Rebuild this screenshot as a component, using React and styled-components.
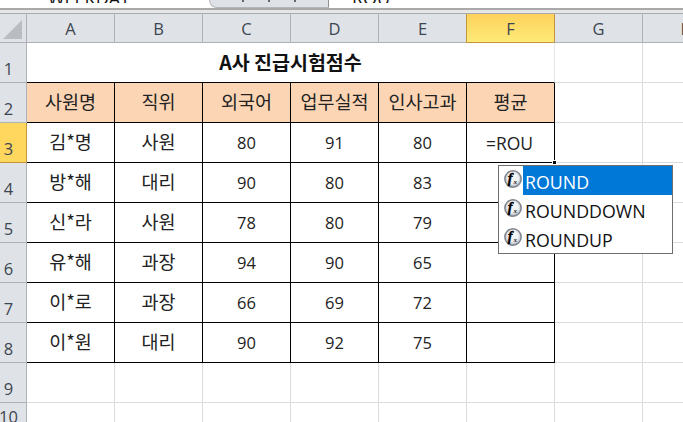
import React from "react";
import styled, { createGlobalStyle } from "styled-components";

const Global = createGlobalStyle`
  html, body { margin: 0; padding: 0; background: #fff; overflow: hidden; }
  #root { width: 683px; height: 422px; overflow: hidden; }
  * { box-sizing: border-box; }
`;

const FONT = `"Noto Sans CJK KR", "Noto Sans", sans-serif`;
const LATIN = `"Open Sans", "Noto Sans CJK KR", sans-serif`;

const Page = styled.div`
  width: 683px;
  height: 422px;
  display: flex;
  flex-direction: column;
  overflow: hidden;
  font-family: ${FONT};
  color: #222;
`;

const FormulaStrip = styled.div`
  height: 14px;
  flex: none;
  display: flex;
  background: #e6e6e6;
  border-bottom: 1px solid #a9abae;
  padding-bottom: 3px;
`;

const StripInner = styled.div`
  flex: 1;
  height: 10px;
  display: flex;
  background: #fff;
  border-bottom: 2px solid #a9a9a9;
  overflow: hidden;
`;

const ClippedText = styled.div`
  font-family: ${LATIN};
  font-size: 18px;
  line-height: 18px;
  height: 14px;
  overflow: hidden;
  color: #111;
  white-space: nowrap;
  margin-top: -11px;
  padding-left: ${(p) => p.$left}px;
  width: ${(p) => p.$width}px;
  flex: none;
`;

const FormulaTab = styled.div`
  width: 120px;
  flex: none;
  height: 8px;
  background: #dee1e6;
  border: 1px solid #b4b6ba;
  border-top: none;
  border-right: 1px solid #8e9094;
  border-bottom-left-radius: 14px;
  display: flex;
  justify-content: center;
  gap: 24px;
`;

const TabTick = styled.span`
  width: 2px;
  height: 2px;
  background: #666;
`;

const Sheet = styled.div`
  position: relative;
  display: grid;
  grid-template-columns: 27px repeat(8, 88px);
  grid-template-rows: 29px repeat(10, 40px);
`;

const Corner = styled.div`
  background: #dfe2e6;
  border-right: 1px solid #aeb1b5;
  border-bottom: 1px solid #aeb1b5;
  display: flex;
  align-items: flex-end;
  justify-content: flex-end;
  padding: 0 4px 3px 0;
`;

const CornerMark = styled.span`
  width: 19px;
  height: 19px;
  background: #b9bcc0;
  clip-path: polygon(100% 0, 100% 100%, 0 100%);
`;

const ColHead = styled.div`
  background: ${(p) => (p.$active ? "linear-gradient(#fdd25c, #ffea78)" : "#dfe2e6")};
  border-right: 1px solid ${(p) => (p.$active ? "#c6963c" : "#aeb1b5")};
  border-bottom: 1px solid ${(p) => (p.$active ? "#c6963c" : "#aeb1b5")};
  border-left: ${(p) => (p.$active ? "1px solid #c6963c" : "none")};
  margin-left: ${(p) => (p.$active ? "-1px" : "0")};
  display: flex;
  align-items: center;
  justify-content: center;
  font-family: ${LATIN};
  font-size: 16.5px;
  color: #3d4650;
`;

const RowHead = styled.div`
  background: ${(p) => (p.$active ? "#ffd65e" : "#dfe2e6")};
  border-right: 1px solid ${(p) => (p.$active ? "#c6963c" : "#aeb1b5")};
  border-bottom: 1px solid ${(p) => (p.$active ? "#c6963c" : "#aeb1b5")};
  display: flex;
  align-items: ${(p) => (p.$clipped ? "flex-start" : "flex-end")};
  justify-content: center;
  padding: ${(p) => (p.$clipped ? "3px 9px 0 0" : "0 9px 2px 0")};
  font-family: ${LATIN};
  font-size: 16.5px;
  line-height: 22px;
  color: #3d4650;
`;

const Empty = styled.div`
  border-right: 1px solid #dcdcdc;
  border-bottom: 1px solid #dcdcdc;
`;

const Title = styled.div`
  grid-column: span 6;
  border-right: 1px solid #e4e4e4;
  border-bottom: 1px solid #000;
  display: flex;
  align-items: center;
  justify-content: center;
  padding-bottom: 2px;
  font-size: 19.5px;
  font-weight: 700;
  color: #111;
`;

const Cell = styled.div`
  background: ${(p) => (p.$head ? "#fcd5b4" : "#fff")};
  border-right: 1px solid #000;
  border-bottom: 1px solid #000;
  display: flex;
  align-items: center;
  justify-content: center;
  padding-bottom: ${(p) => (p.$hangul ? "3px" : "0")};
  font-family: ${(p) => (p.$hangul ? FONT : LATIN)};
  font-size: ${(p) => (p.$hangul ? "18.5px" : "16.5px")};
  line-height: 22px;
  color: #222;
  white-space: nowrap;
`;

const EditCell = styled(Cell)`
  position: relative;
  font-size: 17.5px;
  padding-right: 2px;
`;

const Handle = styled.span`
  position: absolute;
  right: -3px;
  bottom: -3px;
  width: 5px;
  height: 5px;
  background: #000;
  border: 1px solid #fff;
`;

const Menu = styled.ul`
  position: absolute;
  left: 498px;
  top: 151px;
  width: 175px;
  height: 89px;
  margin: 0;
  padding: 0;
  list-style: none;
  background: #fff;
  border: 1px solid #6e6e6e;
  display: flex;
  flex-direction: column;
`;

const MenuItem = styled.li`
  height: 29px;
  display: flex;
  align-items: center;
  padding-left: 5px;
`;

const MenuLabel = styled.span`
  flex: 1;
  height: 100%;
  margin-left: 1px;
  padding: 3px 0 0 2px;
  display: flex;
  align-items: center;
  font-family: ${LATIN};
  font-size: 17.8px;
  background: ${(p) => (p.$selected ? "#0078d7" : "transparent")};
  color: ${(p) => (p.$selected ? "#fff" : "#111")};
`;

const FxIcon = () => (
  <svg width="18" height="18" viewBox="0 0 19 19" style={{ flex: "none", marginTop: -3 }}>
    <defs>
      <linearGradient id="fxg" x1="0" y1="0" x2="0" y2="1">
        <stop offset="0" stopColor="#eef0f3" />
        <stop offset="1" stopColor="#b9bfc9" />
      </linearGradient>
    </defs>
    <circle cx="9.5" cy="9.5" r="8.6" fill="url(#fxg)" stroke="#7f848d" strokeWidth="1.6" />
    <circle cx="9.5" cy="9.5" r="6.2" fill="#fff" opacity="0.7" />
    <text x="4" y="14" fontFamily="Liberation Serif, serif" fontStyle="italic" fontWeight="700" fontSize="15" fill="#000" stroke="#000" strokeWidth="0.4">f</text>
    <text x="10" y="14.5" fontFamily="Liberation Serif, serif" fontStyle="italic" fontWeight="700" fontSize="7.5" fill="#111">x</text>
  </svg>
);

const columns = ["A", "B", "C", "D", "E", "F", "G", "H"];
const headers = ["사원명", "직위", "외국어", "업무실적", "인사고과", "평균"];
const rows = [
  ["김*명", "사원", 80, 91, 80],
  ["방*해", "대리", 90, 80, 83],
  ["신*라", "사원", 78, 80, 79],
  ["유*해", "과장", 94, 90, 65],
  ["이*로", "과장", 66, 69, 72],
  ["이*원", "대리", 90, 92, 75],
];
const suggestions = ["ROUND", "ROUNDDOWN", "ROUNDUP"];

export default function App() {
  return (
    <Page>
      <Global />
      <FormulaStrip>
        <StripInner>
          <ClippedText $left={48} $width={209}>WEEKDAY</ClippedText>
          <FormulaTab>
            <TabTick />
            <TabTick />
            <TabTick />
          </FormulaTab>
          <ClippedText $left={23} $width={200}>ROU</ClippedText>
        </StripInner>
      </FormulaStrip>
      <Sheet>
        <Corner>
          <CornerMark />
        </Corner>
        {columns.map((c) => (
          <ColHead key={c} $active={c === "F"}>{c}</ColHead>
        ))}

        <RowHead>1</RowHead>
        <Title>A사 진급시험점수</Title>
        <Empty />
        <Empty />

        <RowHead>2</RowHead>
        {headers.map((h) => (
          <Cell key={h} $head $hangul>{h}</Cell>
        ))}
        <Empty />
        <Empty />

        {rows.map((r, i) => (
          <React.Fragment key={r[0]}>
            <RowHead $active={i === 0}>{i + 3}</RowHead>
            {r.map((v, j) => (
              <Cell key={j} $hangul={j < 2}>{v}</Cell>
            ))}
            {i === 0 ? (
              <EditCell>
                =ROU
                <Handle />
              </EditCell>
            ) : (
              <Cell />
            )}
            <Empty />
            <Empty />
          </React.Fragment>
        ))}

        {[9, 10].map((n) => (
          <React.Fragment key={n}>
            <RowHead $clipped={n === 10}>{n}</RowHead>
            {columns.map((c) => (
              <Empty key={c} />
            ))}
          </React.Fragment>
        ))}

        <Menu>
          {suggestions.map((s, i) => (
            <MenuItem key={s}>
              <FxIcon />
              <MenuLabel $selected={i === 0}>{s}</MenuLabel>
            </MenuItem>
          ))}
        </Menu>
      </Sheet>
    </Page>
  );
}
